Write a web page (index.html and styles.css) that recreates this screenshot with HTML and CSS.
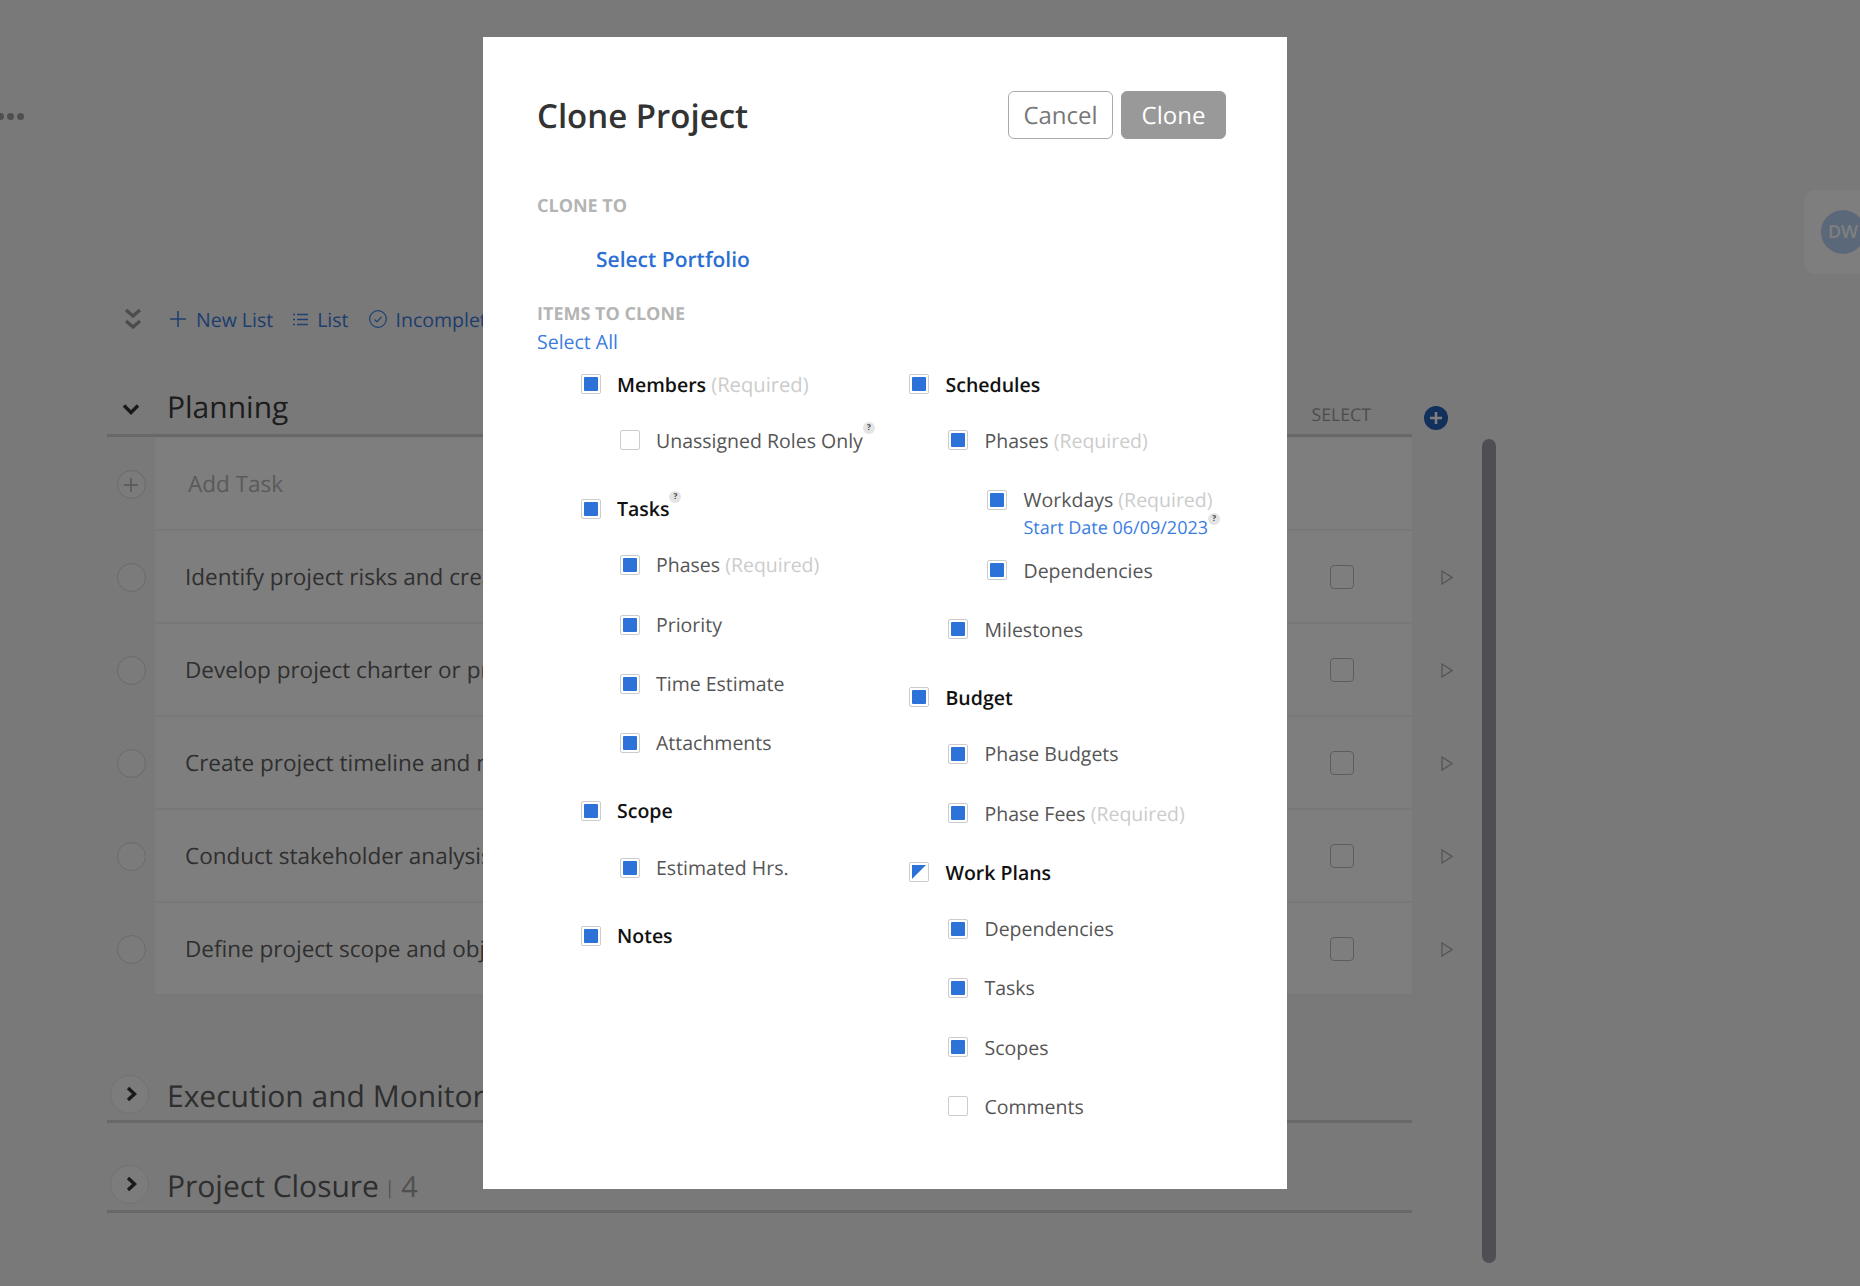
FILE: index.html
```html
<!DOCTYPE html>
<html lang="en">
<head>
<meta charset="utf-8">
<title>Clone Project</title>
<link rel="stylesheet" href="styles.css">
</head>
<body>
<div class="page">
  <div class="dots"><i></i><i></i><i></i></div>
  <div class="board">
    <div class="toolbar">
      <svg class="tool-collapse" width="20" height="24" viewBox="0 0 20 24"><path d="M3 3l7 6 7-6M3 14l7 6 7-6" fill="none" stroke="#999" stroke-width="3.4"/></svg>
      <span class="tool tool-new"><svg width="16" height="16" viewBox="0 0 16 16"><path d="M8 0v16M0 8h16" stroke="#3f7fe0" stroke-width="1.6"/></svg>New List</span>
      <span class="tool"><svg width="15" height="13" viewBox="0 0 15 13"><path d="M4 1.5h11M4 6.5h11M4 11.5h11M0 1.5h2M0 6.5h2M0 11.5h2" stroke="#3f7fe0" stroke-width="1.3"/></svg>List</span>
      <span class="tool"><svg width="18" height="18" viewBox="0 0 18 18"><circle cx="9" cy="9" r="8.3" fill="none" stroke="#3f7fe0" stroke-width="1.2"/><path d="M5.5 9.5l2.5 2.3 4.5-5" fill="none" stroke="#3f7fe0" stroke-width="1.2"/></svg>Incomplete</span>
    </div>

    <div class="head-wrap planning">
      <div class="head">
        <span class="head-gutter"><svg class="head-chevron" width="18" height="12" viewBox="0 0 18 12"><path d="M2 2.5l7 7 7-7" fill="none" stroke="#333" stroke-width="3.4"/></svg></span>
        <span class="head-title">Planning</span>
        <span class="head-select">SELECT</span>
      </div>
      <span class="add-col"><svg width="24" height="24" viewBox="0 0 24 24"><circle cx="12" cy="12" r="12" fill="#2360b8"/><path d="M12 6v12M6 12h12" stroke="#fff" stroke-width="2.6"/></svg></span>
    </div>

    <div class="tasks">
      <div class="task">
        <span class="gutter"><span class="circle"><svg width="14" height="14" viewBox="0 0 14 14"><path d="M7 0v14M0 7h14" stroke="#aaa" stroke-width="1.4"/></svg></span></span>
        <div class="task-body task-add"><span class="task-name">Add Task</span></div>
        <span class="task-after"></span>
      </div>
      <div class="task">
        <span class="gutter"><span class="circle"></span></span>
        <div class="task-body"><span class="task-name">Identify project risks and create a mitigation plan</span><span class="box"></span></div>
        <span class="task-after"><svg width="12" height="15" viewBox="0 0 12 15"><path d="M1 1l10 6.500-10 6.500z" fill="none" stroke="#aaa" stroke-width="1.300"/></svg></span>
      </div>
      <div class="task">
        <span class="gutter"><span class="circle"></span></span>
        <div class="task-body"><span class="task-name">Develop project charter or proposal</span><span class="box"></span></div>
        <span class="task-after"><svg width="12" height="15" viewBox="0 0 12 15"><path d="M1 1l10 6.500-10 6.500z" fill="none" stroke="#aaa" stroke-width="1.300"/></svg></span>
      </div>
      <div class="task">
        <span class="gutter"><span class="circle"></span></span>
        <div class="task-body"><span class="task-name">Create project timeline and milestones</span><span class="box"></span></div>
        <span class="task-after"><svg width="12" height="15" viewBox="0 0 12 15"><path d="M1 1l10 6.500-10 6.500z" fill="none" stroke="#aaa" stroke-width="1.300"/></svg></span>
      </div>
      <div class="task">
        <span class="gutter"><span class="circle"></span></span>
        <div class="task-body"><span class="task-name">Conduct stakeholder analysis</span><span class="box"></span></div>
        <span class="task-after"><svg width="12" height="15" viewBox="0 0 12 15"><path d="M1 1l10 6.500-10 6.500z" fill="none" stroke="#aaa" stroke-width="1.300"/></svg></span>
      </div>
      <div class="task">
        <span class="gutter"><span class="circle"></span></span>
        <div class="task-body"><span class="task-name">Define project scope and objectives</span><span class="box"></span></div>
        <span class="task-after"><svg width="12" height="15" viewBox="0 0 12 15"><path d="M1 1l10 6.500-10 6.500z" fill="none" stroke="#aaa" stroke-width="1.300"/></svg></span>
      </div>
    </div>

    <div class="head-wrap execution">
      <div class="head">
        <span class="head-gutter"><span class="head-circle"><svg class="circle-chevron" width="12" height="16" viewBox="0 0 12 16"><path d="M2 2l6.500 6-6.500 6" fill="none" stroke="#333" stroke-width="3.400"/></svg></span></span>
        <span class="head-title">Execution and Monitoring</span>
      </div>
    </div>
    <div class="head-wrap closure">
      <div class="head">
        <span class="head-gutter"><span class="head-circle"><svg class="circle-chevron" width="12" height="16" viewBox="0 0 12 16"><path d="M2 2l6.500 6-6.500 6" fill="none" stroke="#333" stroke-width="3.400"/></svg></span></span>
        <span class="head-title">Project Closure <span class="head-count"><span class="sep">|</span> 4</span></span>
      </div>
    </div>
  </div>

  <div class="scrollbar"></div>
  <div class="side-panel"><span class="avatar">DW</span></div>
</div>

<div class="overlay"></div>

<div class="modal">
  <div class="modal-head">
    <h1 class="modal-title">Clone Project</h1>
    <div class="modal-actions">
      <button class="btn btn-cancel">Cancel</button>
      <button class="btn btn-clone">Clone</button>
    </div>
  </div>
  <div class="label label-to">CLONE TO</div>
  <div class="portfolio">Select Portfolio</div>
  <div class="label label-items">ITEMS TO CLONE</div>
  <div class="select-all">Select All</div>

  <div class="columns">
    <div class="column">
      <div class="row top first"><span class="cb on"></span><span class="name">Members <em>(Required)</em></span></div>
      <div class="row l1 g56"><span class="cb"></span><span class="text">Unassigned Roles Only<span class="help">?</span></span></div>
      <div class="row top g69 raised"><span class="cb on"></span><span class="name">Tasks<span class="help">?</span></span></div>
      <div class="row l1 g56 raised"><span class="cb on"></span><span class="text">Phases <em>(Required)</em></span></div>
      <div class="row l1 g60 raised"><span class="cb on"></span><span class="text">Priority</span></div>
      <div class="row l1 g59 raised"><span class="cb on"></span><span class="text">Time Estimate</span></div>
      <div class="row l1 g59 raised"><span class="cb on"></span><span class="text">Attachments</span></div>
      <div class="row top g68 raised"><span class="cb on"></span><span class="name">Scope</span></div>
      <div class="row l1 g57 raised"><span class="cb on"></span><span class="text">Estimated Hrs.</span></div>
      <div class="row top g68 raised"><span class="cb on"></span><span class="name">Notes</span></div>
    </div>
    <div class="column">
      <div class="row top first"><span class="cb on"></span><span class="name">Schedules</span></div>
      <div class="row l1 g56"><span class="cb on"></span><span class="text">Phases <em>(Required)</em></span></div>
      <div class="row l2 g60 raised"><span class="cb on"></span><span class="text">Workdays <em>(Required)</em><span class="date">Start Date 06/09/2023<span class="help">?</span></span></span></div>
      <div class="row l2 g70"><span class="cb on"></span><span class="text">Dependencies</span></div>
      <div class="row l1 g59"><span class="cb on"></span><span class="text">Milestones</span></div>
      <div class="row top g68"><span class="cb on"></span><span class="name">Budget</span></div>
      <div class="row l1 g57 raised"><span class="cb on"></span><span class="text">Phase Budgets</span></div>
      <div class="row l1 g59"><span class="cb on"></span><span class="text">Phase Fees <em>(Required)</em></span></div>
      <div class="row top g59"><span class="cb half"></span><span class="name">Work Plans</span></div>
      <div class="row l1 g57 raised"><span class="cb on"></span><span class="text">Dependencies</span></div>
      <div class="row l1 g59 raised"><span class="cb on"></span><span class="text">Tasks</span></div>
      <div class="row l1 g59"><span class="cb on"></span><span class="text">Scopes</span></div>
      <div class="row l1 g59"><span class="cb"></span><span class="text">Comments</span></div>
    </div>
  </div>
</div>
</body>
</html>
```
FILE: styles.css
```css
* { box-sizing: border-box; }
html, body { margin: 0; height: 100%; }
body {
  font-family: "Open Sans", "Liberation Sans", sans-serif;
  background: #f3f3f3;
  color: #333;
  overflow: hidden;
  text-rendering: geometricPrecision;
}
.page { position: relative; height: 1286px; overflow: hidden; }

.dots { display: flex; gap: 3.4px; height: 8px; margin-left: -3.5px; position: relative; top: 113px; }
.dots i { width: 7px; height: 7px; border-radius: 50%; background: #9e9e9e; }

.board { margin-left: 107px; padding-top: 297px; }
.toolbar { display: flex; align-items: center; height: 28px; }
.tool-collapse { margin-left: 16px; margin-right: 27px; }
.tool { display: inline-flex; align-items: center; gap: 9px; margin-right: 20px; font-size: 19.500px; color: #3a7bdc; white-space: nowrap; }
.tool-new { gap: 10px; }

.head-wrap { display: flex; align-items: flex-end; }
.planning { margin-top: 54px; }
.execution { margin-top: 77px; }
.closure { margin-top: 40px; }
.head { display: flex; align-items: center; width: 1305px; height: 50px; padding-bottom: 2px; border-bottom: 3px solid #d0d0d0; position: relative; }
.planning .head { padding-bottom: 9px; }
.head-gutter { display: flex; justify-content: center; align-items: center; width: 45px; margin-right: 15px; flex: none; }
.head-chevron { margin-left: 3px; margin-top: 6px; }
.head-circle { display: flex; align-items: center; justify-content: center; width: 39px; height: 39px; margin-bottom: 3px; border-radius: 50%; background: #f8f8f8; border: 1px solid #e4e4e4; }
.circle-chevron { margin-left: 4px; }
.head-title { font-size: 30px; color: #5c5c5c; white-space: nowrap; }
.planning .head-title { color: #3a3a3a; }
.head-count { color: #a0a0a0; font-size: 29px; margin-left: -2px; }
.sep { font-size: 18px; position: relative; top: -3px; margin-right: -1px; }
.head-select { margin-left: auto; margin-right: 41px; margin-top: 18px; font-size: 17.700px; color: #9a9a9a; }
.add-col { margin-left: 12px; margin-bottom: 7px; height: 24px; }

.tasks { margin-top: 1px; }
.task { display: flex; height: 93px; }
.gutter { display: flex; align-items: center; justify-content: center; width: 48px; flex: none; }
.circle { display: flex; align-items: center; justify-content: center; width: 29px; height: 29px; border-radius: 50%; border: 1px solid #d4d4d4; background: #f6f6f6; }
.task-body { display: flex; align-items: center; justify-content: space-between; width: 1257px; background: #fdfdfd; border-bottom: 2px solid #f0f0f0; padding-left: 30px; }
.task-add { padding-left: 33px; }
.task-add .task-name { color: #b5b5b5; }
.task-name { font-size: 22.500px; color: #5f5f5f; white-space: nowrap; }
.box { width: 24px; height: 24px; margin-right: 58px; border: 1px solid #bbb; border-radius: 4px; flex: none; }
.task-after { display: flex; align-items: center; padding-left: 29px; }

.scrollbar { position: absolute; left: 1482px; top: 439px; width: 14px; height: 824px; border-radius: 7px; background: #9c9ea4; }
.side-panel { position: absolute; left: 1804px; top: 190px; width: 80px; height: 84px; border-radius: 12px; background: #fcfcfc; display: flex; align-items: center; padding-left: 17px; }
.avatar { display: flex; align-items: center; justify-content: center; width: 44px; height: 44px; border-radius: 50%; background: #b4d0f4; color: #fff; font-size: 18px; font-weight: 600; }

.overlay { position: fixed; inset: 0; background: rgba(0, 0, 0, 0.5); }

.modal { position: absolute; left: 483px; top: 37px; width: 804px; height: 1152px; background: #fff; padding: 54px 61px 0 54px; }
.modal-head { display: flex; justify-content: space-between; align-items: center; height: 48px; }
.modal-title { margin: 0; font-size: 33px; font-weight: 600; color: #333; }
.modal-actions { display: flex; gap: 8px; }
.btn { width: 105px; height: 48px; border-radius: 6px; font-family: inherit; font-size: 24px; padding: 0; text-rendering: geometricPrecision; }
.btn-cancel { background: #fff; border: 1px solid #aaa; color: #777; }
.btn-clone { background: #999; border: 1px solid #999; color: #fff; }

.label { font-size: 18px; font-weight: 700; color: #b4b4b4; line-height: 24px; }
.label-to { margin-top: 55px; }
.portfolio { margin-top: 28px; margin-left: 59px; font-size: 21px; font-weight: 600; color: #2b6fd4; line-height: 28px; }
.label-items { margin-top: 28px; }
.select-all { font-size: 19.500px; color: #3b7ddf; line-height: 28px; margin-top: 2px; }

.columns { display: flex; }
.column { width: 328px; flex: none; }
.column:first-child { margin-left: 44px; }
.column:first-child .cb { margin-right: 16px; }

.row { display: flex; align-items: flex-start; height: 28px; }
.first { margin-top: 14px; }
.g56 { margin-top: 28px; }
.g57 { margin-top: 29px; }
.g59 { margin-top: 31px; }
.g60 { margin-top: 32px; }
.g68 { margin-top: 40px; }
.g69 { margin-top: 41px; }
.g70 { margin-top: 42px; }
.l1 { padding-left: 39px; }
.l2 { padding-left: 78px; }

.cb { position: relative; width: 20px; height: 20px; margin-top: 4px; margin-right: 16.500px; border: 1px solid #ccc; border-radius: 2px; background: #fff; flex: none; }
.cb.on::after, .cb.half::after { content: ""; position: absolute; left: 2px; top: 2px; width: 14px; height: 14px; background: #2d72d8; border-radius: 1px; }
.cb.half::after { clip-path: polygon(0 0, 100% 0, 0 100%); border-radius: 0; }

.name, .text { font-size: 19.500px; line-height: 28px; padding-top: 1px; white-space: nowrap; position: relative; }
.raised .name, .raised .text { padding-top: 0; }
.name { font-weight: 600; color: #111; }
.text { color: #555; }
em { font-style: normal; font-weight: 400; color: #ccc; }
.name em { font-size: 20.200px; line-height: 0; }
.date { display: block; color: #3b7ddf; font-size: 18px; line-height: 28px; width: max-content; position: relative; }

.help { position: absolute; left: 100%; top: -4px; display: flex; align-items: center; justify-content: center; width: 12px; height: 12px; border-radius: 50%; background: #e4e4e4; color: #444; font-size: 8px; font-weight: 700; line-height: 1; }
.date .help { top: -1px; }
```
